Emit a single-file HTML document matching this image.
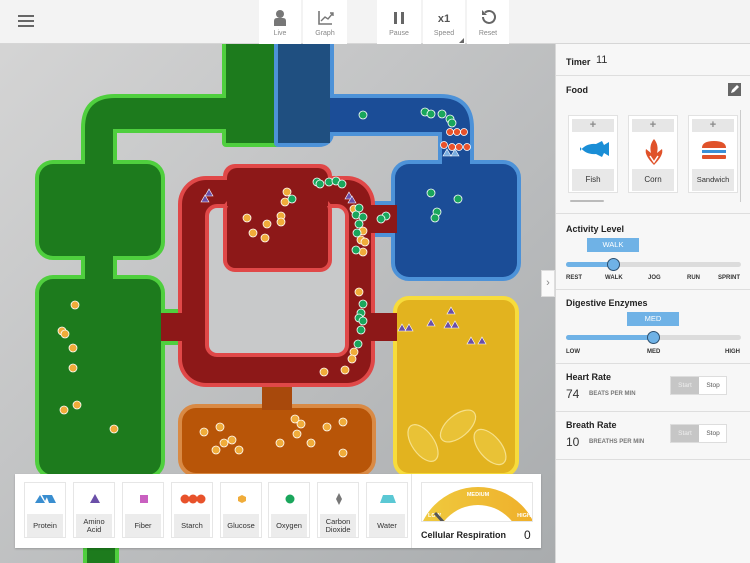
<!DOCTYPE html>
<html><head><meta charset="utf-8"><style>
*{box-sizing:border-box;margin:0;padding:0}
body{width:750px;height:563px;overflow:hidden;font-family:"Liberation Sans",sans-serif;position:relative;background:#c4c4c4}
.abs{position:absolute}
.top{left:0;top:0;width:750px;height:44px;background:#f3f3f3;border-bottom:1px solid #d6d6d6}
.tb{position:absolute;top:0;height:44px;background:#fff;text-align:center;font-size:7px;color:#888}
.tb .lb{position:absolute;left:0;right:0;top:30px}
.panel{left:555px;top:44px;width:195px;height:519px;background:#f7f7f7;border-left:1px solid #d8d8d8}
.sec{position:absolute;left:0;width:195px;border-bottom:1px solid #dedede}
.h{font-weight:bold;font-size:9px;color:#222;position:absolute;left:10px}
.card{position:absolute;top:39px;width:50px;height:78px;background:#fff;border:1px solid #e2e2e2}
.card .p{position:absolute;left:3px;right:3px;top:3px;height:13px;background:#e6e6e6;color:#888;font-size:11px;text-align:center;line-height:13px;font-weight:bold}
.card .l{position:absolute;left:3px;right:3px;top:53px;height:22px;background:#e8e8e8;font-size:8px;color:#333;text-align:center;line-height:22px}
.sl{font-size:6px;font-weight:bold;color:#333;position:absolute}
.btns{position:absolute;left:114px;width:57px;height:19px;border:1px solid #ddd;background:#fff}
.btns span{position:absolute;top:0;width:28px;height:17px;line-height:17px;text-align:center;font-size:6.5px}
.lg{left:15px;top:474px;width:526px;height:74px;background:#fff;box-shadow:0 1px 2px rgba(0,0,0,.2)}
.lc{position:absolute;top:8px;width:42px;height:56px;border:1px solid #e6e6e6;background:#fff}
.lc .l{position:absolute;left:2px;right:2px;top:31px;height:23px;background:#ececec;font-size:7.5px;color:#333;text-align:center;display:flex;align-items:center;justify-content:center;line-height:8px}
.lc svg{position:absolute;left:0;top:6px}
</style></head><body>
<svg class="abs" style="left:0;top:0" width="555" height="563">
<defs><linearGradient id="bg" x1="0" y1="0" x2="1" y2="1"><stop offset="0" stop-color="#d6d6d6"/><stop offset="1" stop-color="#a9acae"/></linearGradient></defs>
<rect width="555" height="563" fill="url(#bg)"/>
<g stroke="#4fcf3e" stroke-width="8" fill="#4fcf3e" stroke-linejoin="round">
<path d="M85 164V128Q85 98 115 98H278V143H240Q226 143 226 129H113V164Z"/>
<rect x="226" y="40" width="52" height="103"/>
<rect x="39" y="164" width="122" height="92" rx="14"/>
<rect x="85" y="250" width="28" height="35"/>
<rect x="39" y="279" width="122" height="196" rx="14"/>
<rect x="87" y="470" width="28" height="95"/>
<rect x="155" y="313" width="30" height="28"/>
</g>
<g fill="#1d7b1d">
<path d="M85 164V128Q85 98 115 98H278V143H240Q226 143 226 129H113V164Z"/>
<rect x="226" y="40" width="52" height="103"/>
<rect x="39" y="164" width="122" height="92" rx="14"/>
<rect x="85" y="250" width="28" height="35"/>
<rect x="39" y="279" width="122" height="196" rx="14"/>
<rect x="87" y="470" width="28" height="95"/>
<rect x="155" y="313" width="30" height="28"/>
</g>
<g stroke="#4d92d8" stroke-width="8" fill="#4d92d8" stroke-linejoin="round">
<path d="M278 40H330V98H440Q470 98 470 128V164H442V132H330Q330 143 318 143H278Z"/>
<rect x="395" y="164" width="122" height="113" rx="14"/>
<rect x="370" y="205" width="30" height="28"/>
</g>
<g fill="#1b4d97">
<path d="M278 40H330V98H440Q470 98 470 128V164H442V132H330Q330 143 318 143H278Z"/>
<rect x="395" y="164" width="122" height="113" rx="14"/>
</g>
<rect x="278" y="40" width="52" height="103" fill="#1f4f80"/>
<rect x="395" y="298" width="122" height="177" rx="14" fill="#e2b31f" stroke="#f7dc3c" stroke-width="4"/>
<rect x="180" y="406" width="194" height="69" rx="16" fill="#b85508" stroke="#d98a45" stroke-width="4"/>
<rect x="262" y="380" width="30" height="30" fill="#a8490c"/>
<g fill="#e04848">
<rect x="178" y="176" width="197" height="211" rx="28"/>
<rect x="223" y="164" width="109" height="40" rx="12"/>
</g>
<g fill="#8d1818">
<rect x="182" y="180" width="189" height="203" rx="24"/>
<rect x="227" y="168" width="101" height="36" rx="10"/>
</g>
<rect x="371" y="205" width="26" height="28" fill="#8d1818"/>
<rect x="371" y="313" width="26" height="28" fill="#8d1818"/>
<rect x="161" y="313" width="22" height="28" fill="#8d1818"/>
<rect x="207" y="206" width="140" height="149" rx="10" fill="#c8c9ca" stroke="#e04848" stroke-width="4"/>
<rect x="225" y="200" width="105" height="70" rx="10" fill="#8d1818" stroke="#e04848" stroke-width="4"/>
<rect x="227" y="196" width="101" height="10" fill="#8d1818"/>
<g fill="#e9c236" stroke="#f6e08a" stroke-width="1.2">
<ellipse cx="423" cy="443" rx="11" ry="21" transform="rotate(-35 423 443)"/>
<ellipse cx="458" cy="426" rx="11" ry="21" transform="rotate(50 458 426)"/>
<ellipse cx="490" cy="447" rx="11" ry="21" transform="rotate(-40 490 447)"/>
</g>
<g fill="#f0ac3a" stroke="#fff" stroke-width=".8">
<circle cx="75" cy="305" r="4"/><circle cx="62" cy="331" r="4"/><circle cx="65" cy="334" r="4"/><circle cx="73" cy="348" r="4"/><circle cx="73" cy="368" r="4"/><circle cx="64" cy="410" r="4"/><circle cx="77" cy="405" r="4"/><circle cx="114" cy="429" r="4"/>
<circle cx="204" cy="432" r="4"/><circle cx="220" cy="427" r="4"/><circle cx="224" cy="443" r="4"/><circle cx="232" cy="440" r="4"/><circle cx="216" cy="450" r="4"/><circle cx="239" cy="450" r="4"/><circle cx="280" cy="443" r="4"/><circle cx="295" cy="419" r="4"/><circle cx="301" cy="424" r="4"/><circle cx="297" cy="434" r="4"/><circle cx="327" cy="427" r="4"/><circle cx="343" cy="422" r="4"/><circle cx="311" cy="443" r="4"/><circle cx="343" cy="453" r="4"/>
<circle cx="247" cy="218" r="4"/><circle cx="267" cy="224" r="4"/><circle cx="253" cy="233" r="4"/><circle cx="265" cy="238" r="4"/><circle cx="281" cy="216" r="4"/><circle cx="281" cy="222" r="4"/><circle cx="287" cy="192" r="4"/><circle cx="285" cy="202" r="4"/>
<circle cx="354" cy="209" r="4"/><circle cx="363" cy="231" r="4"/><circle cx="361" cy="240" r="4"/><circle cx="365" cy="242" r="4"/><circle cx="363" cy="252" r="4"/><circle cx="359" cy="292" r="4"/><circle cx="354" cy="352" r="4"/><circle cx="352" cy="359" r="4"/><circle cx="345" cy="370" r="4"/><circle cx="324" cy="372" r="4"/>
</g>
<g fill="#1aa65c" stroke="#fff" stroke-width=".8">
<circle cx="292" cy="199" r="4"/><circle cx="317" cy="182" r="4"/><circle cx="320" cy="184" r="4"/><circle cx="329" cy="182" r="4"/><circle cx="336" cy="181" r="4"/><circle cx="342" cy="184" r="4"/>
<circle cx="359" cy="208" r="4"/><circle cx="356" cy="215" r="4"/><circle cx="363" cy="217" r="4"/><circle cx="359" cy="224" r="4"/><circle cx="357" cy="233" r="4"/><circle cx="356" cy="250" r="4"/><circle cx="386" cy="216" r="4"/><circle cx="381" cy="219" r="4"/>
<circle cx="363" cy="304" r="4"/><circle cx="361" cy="313" r="4"/><circle cx="359" cy="318" r="4"/><circle cx="363" cy="321" r="4"/><circle cx="361" cy="330" r="4"/><circle cx="358" cy="344" r="4"/>
<circle cx="431" cy="193" r="4"/><circle cx="458" cy="199" r="4"/><circle cx="437" cy="212" r="4"/><circle cx="435" cy="218" r="4"/><circle cx="363" cy="115" r="4"/>
<circle cx="425" cy="112" r="4"/><circle cx="431" cy="114" r="4"/><circle cx="442" cy="114" r="4"/><circle cx="450" cy="119" r="4"/><circle cx="452" cy="123" r="4"/>
</g>
<g fill="#e8522b" stroke="#fff" stroke-width=".8">
<circle cx="450" cy="132" r="3.5"/><circle cx="457" cy="132" r="3.5"/><circle cx="464" cy="132" r="3.5"/><circle cx="444" cy="145" r="3.5"/><circle cx="452" cy="147" r="3.5"/><circle cx="459" cy="147" r="3.5"/><circle cx="467" cy="147" r="3.5"/>
</g>
<g fill="#6a4fa8" stroke="#fff" stroke-width=".6">
<path d="M209 189l4 7h-8z"/><path d="M205 195l4 7h-8z"/><path d="M349 192l4 7h-8z"/><path d="M352 196l4 7h-8z"/>
<path d="M402 324l4 7h-8z"/><path d="M409 324l4 7h-8z"/><path d="M431 319l4 7h-8z"/><path d="M451 307l4 7h-8z"/><path d="M448 321l4 7h-8z"/><path d="M455 321l4 7h-8z"/><path d="M471 337l4 7h-8z"/><path d="M482 337l4 7h-8z"/>
</g>
<g fill="#7aaee0" stroke="#fff" stroke-width=".6"><path d="M447 149l4 7h-8z"/><path d="M455 149l4 7h-8z"/></g>
</svg>
<div class="abs top">
<div class="abs" style="left:18px;top:15px;width:16px;height:2px;background:#666;box-shadow:0 5px 0 #666,0 10px 0 #666"></div>
<div class="tb" style="left:259px;width:42px"><svg width="42" height="30"><circle cx="21" cy="14" r="4" fill="#777"/><path d="M15 26v-5q0-3 3-3h6q3 0 3 3v5z" fill="#777"/></svg><div class="lb">Live</div></div>
<div class="tb" style="left:303px;width:44px"><svg width="44" height="30"><path d="M16 11v13h13" stroke="#777" stroke-width="1.6" fill="none"/><path d="M18 21l4-4 3 2 5-6M27 13h3v3" stroke="#777" stroke-width="1.4" fill="none"/></svg><div class="lb">Graph</div></div>
<div class="tb" style="left:377px;width:44px"><svg width="44" height="30"><rect x="17" y="12" width="3" height="12" fill="#666"/><rect x="24" y="12" width="3" height="12" fill="#666"/></svg><div class="lb">Pause</div></div>
<div class="tb" style="left:423px;width:42px"><div style="position:absolute;left:0;right:0;top:13px;font-size:11px;font-weight:bold;color:#555">x1</div><div class="lb">Speed</div><div style="position:absolute;right:1px;bottom:1px;border-left:5px solid transparent;border-bottom:5px solid #666"></div></div>
<div class="tb" style="left:467px;width:42px"><svg width="42" height="30"><path d="M16 17a6 6 0 1 0 2-4.5" stroke="#666" stroke-width="2" fill="none"/><path d="M15 10v5h5z" fill="#666"/></svg><div class="lb">Reset</div></div>
</div>
<div class="abs panel">
<div class="sec" style="top:0;height:32px"><span class="h" style="top:13px">Timer</span><span style="position:absolute;left:40px;top:10px;font-size:11px;color:#333">11</span></div>
<div class="sec" style="top:32px;height:138px"><span class="h" style="top:9px">Food</span>
<div style="position:absolute;left:172px;top:7px;width:13px;height:13px;background:#666"><svg width="13" height="13"><path d="M3 10l1-3 5-5 2 2-5 5z" fill="#fff"/></svg></div>
<div class="card" style="left:12px"><div class="p">+</div><svg style="position:absolute;left:9px;top:25px" width="32" height="20"><path d="M2 10q6-8 16-7l6-3 2 4 5-3v14l-5-3-2 4-6-3q-10 1-16-7z" fill="#1a8ed6"/></svg><div class="l">Fish</div></div>
<div class="card" style="left:72px"><div class="p">+</div><svg style="position:absolute;left:11px;top:21px" width="28" height="30"><path d="M14 2q5 6 3 14l5-4q2 6-8 16-10-10-8-16l5 4q-2-8 3-14z" fill="#e0522a"/><path d="M10 19l4 6 4-6" stroke="#fff" stroke-width="1.5" fill="none"/></svg><div class="l">Corn</div></div>
<div class="card" style="left:132px"><div class="p">+</div><svg style="position:absolute;left:11px;top:24px" width="28" height="22"><path d="M2 8q0-7 12-7t12 7z" fill="#e0522a"/><rect x="2" y="10" width="24" height="3" fill="#3b8fd6"/><rect x="2" y="15" width="24" height="4" rx="1" fill="#e0522a"/></svg><div class="l" style="font-size:7.5px">Sandwich</div></div>
<div style="position:absolute;left:14px;top:124px;width:34px;height:2px;background:#bbb;border-radius:1px"></div>
<div style="position:absolute;left:184px;top:34px;width:1px;height:92px;background:#ccc"></div>
</div>
<div class="sec" style="top:170px;height:76px"><span class="h" style="top:10px">Activity Level</span>
<div style="position:absolute;left:31px;top:24px;width:52px;height:14px;background:#6fb2e6;color:#fff;font-size:7.5px;text-align:center;line-height:14px">WALK</div>
<div style="position:absolute;left:10px;top:48px;width:175px;height:5px;background:#dcdcdc;border-radius:3px"></div>
<div style="position:absolute;left:10px;top:48px;width:48px;height:5px;background:#6fb2e6;border-radius:3px"></div>
<div style="position:absolute;left:51px;top:44px;width:13px;height:13px;border-radius:50%;background:#6fb2e6;border:1.5px solid #2d4f6e"></div>
<span class="sl" style="left:10px;top:61px">REST</span><span class="sl" style="left:49px;top:61px">WALK</span><span class="sl" style="left:92px;top:61px">JOG</span><span class="sl" style="left:131px;top:61px">RUN</span><span class="sl" style="left:162px;top:61px">SPRINT</span>
</div>
<div class="sec" style="top:246px;height:74px"><span class="h" style="top:8px">Digestive Enzymes</span>
<div style="position:absolute;left:71px;top:22px;width:52px;height:14px;background:#6fb2e6;color:#fff;font-size:7.5px;text-align:center;line-height:14px">MED</div>
<div style="position:absolute;left:10px;top:45px;width:175px;height:5px;background:#dcdcdc;border-radius:3px"></div>
<div style="position:absolute;left:10px;top:45px;width:88px;height:5px;background:#6fb2e6;border-radius:3px"></div>
<div style="position:absolute;left:91px;top:41px;width:13px;height:13px;border-radius:50%;background:#6fb2e6;border:1.5px solid #2d4f6e"></div>
<span class="sl" style="left:10px;top:59px">LOW</span><span class="sl" style="left:91px;top:59px">MED</span><span class="sl" style="left:169px;top:59px">HIGH</span>
</div>
<div class="sec" style="top:320px;height:48px"><span class="h" style="top:8px">Heart Rate</span>
<span style="position:absolute;left:10px;top:23px;font-size:12px;color:#333">74</span><span class="sl" style="left:33px;top:27px;color:#777">BEATS PER MIN</span>
<div class="btns" style="top:12px"><span style="left:0;background:#c6c6c6;color:#eee">Start</span><span style="left:28px;color:#555">Stop</span></div></div>
<div class="sec" style="top:368px;height:48px"><span class="h" style="top:8px">Breath Rate</span>
<span style="position:absolute;left:10px;top:23px;font-size:12px;color:#333">10</span><span class="sl" style="left:33px;top:27px;color:#777">BREATHS PER MIN</span>
<div class="btns" style="top:12px"><span style="left:0;background:#c6c6c6;color:#eee">Start</span><span style="left:28px;color:#555">Stop</span></div></div>
</div>
<div class="abs" style="left:541px;top:270px;width:14px;height:27px;background:#fafafa;border:1px solid #ddd;color:#888;font-size:11px;text-align:center;line-height:25px">›</div>
<div class="abs lg">
<div class="lc" style="left:9px"><svg width="42" height="20"><path d="M10 14l5-8 5 8zM21 6h6l4 8h-7z" fill="#3a8ed0"/><path d="M17 6h6l-3 6z" fill="#3a8ed0"/></svg><div class="l">Protein</div></div>
<div class="lc" style="left:58px"><svg width="42" height="20"><path d="M21 5l5 9h-10z" fill="#6a4fa8"/></svg><div class="l">Amino<br>Acid</div></div>
<div class="lc" style="left:107px"><svg width="42" height="20"><rect x="17" y="6" width="8" height="8" fill="#c960c0"/></svg><div class="l">Fiber</div></div>
<div class="lc" style="left:156px"><svg width="42" height="20"><circle cx="13" cy="10" r="4.5" fill="#e8522b"/><circle cx="21" cy="10" r="4.5" fill="#e8522b"/><circle cx="29" cy="10" r="4.5" fill="#e8522b"/></svg><div class="l">Starch</div></div>
<div class="lc" style="left:205px"><svg width="42" height="20"><path d="M21 6l4 2v4l-4 2-4-2v-4z" fill="#f0ac3a"/></svg><div class="l">Glucose</div></div>
<div class="lc" style="left:253px"><svg width="42" height="20"><circle cx="21" cy="10" r="4.5" fill="#1aa65c"/></svg><div class="l">Oxygen</div></div>
<div class="lc" style="left:302px"><svg width="42" height="20"><path d="M21 4l3 6-3 6-3-6z" fill="#777"/></svg><div class="l">Carbon<br>Dioxide</div></div>
<div class="lc" style="left:351px"><svg width="42" height="20"><path d="M16 6h10l3 8h-16z" fill="#5bc8d4"/></svg><div class="l">Water</div></div>
<div style="position:absolute;left:396px;top:0;width:1px;height:74px;background:#e4e4e4"></div>
<div style="position:absolute;left:406px;top:8px;width:112px;height:40px;border:1px solid #e6e6e6;overflow:hidden;background:#fff">
<svg width="112" height="40"><defs><linearGradient id="g" x1="0" x2="1"><stop offset="0" stop-color="#efcb3f"/><stop offset="1" stop-color="#efae2a"/></linearGradient></defs>
<path d="M-5.5 65.5A61.5 61.5 0 0 1 117.5 65.5H99.5A43.5 43.5 0 0 0 12.5 65.5Z" fill="url(#g)"/>
<text x="56" y="13" font-size="5.5" fill="#fff" text-anchor="middle" font-weight="bold" font-family="Liberation Sans">MEDIUM</text>
<text x="102" y="34" font-size="5.5" fill="#fff" text-anchor="middle" font-weight="bold" font-family="Liberation Sans">HIGH</text>
<text x="6" y="34" font-size="5.5" fill="#fff" font-weight="bold" font-family="Liberation Sans">LOW</text>
<path d="M13 30l11 12" stroke="#555" stroke-width="3"/></svg></div>
<div style="position:absolute;left:406px;top:56px;font-size:9px;font-weight:bold;color:#222">Cellular Respiration</div>
<div style="position:absolute;left:509px;top:54px;font-size:12px;color:#222">0</div>
</div>
</body></html>
